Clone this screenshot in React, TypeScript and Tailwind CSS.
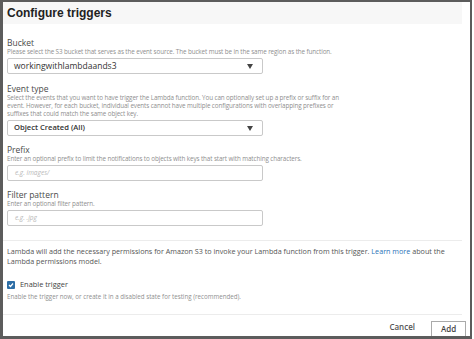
const font = { fontFamily: '"Open Sans", "Liberation Sans", sans-serif' };

function Label({ title, desc, descWidth }: { title: string; desc?: string; descWidth?: string }) {
  return (
    <div>
      <div className="text-[8.5px] leading-[11px] text-[#4a4a4a]">{title}</div>
      {desc && (
        <div className={`text-[6.3px] leading-[8px] text-[#8f8f8f] tracking-[-0.1px] ${descWidth ?? ''}`}>{desc}</div>
      )}
    </div>
  );
}

function Select({ children }: { children: React.ReactNode }) {
  return (
    <div className="mt-[2px] w-[256px] h-[16px] border border-[#c9c9c9] rounded-[2px] flex items-center justify-between pl-[6px] pr-[9px]">
      {children}
      <svg width="6" height="5" viewBox="0 0 6 5">
        <path d="M0 0 L6 0 L3 5 Z" fill="#444" />
      </svg>
    </div>
  );
}

function Input({ placeholder }: { placeholder: string }) {
  return (
    <div className="mt-[2px] w-[256px] h-[16px] border border-[#c9c9c9] rounded-[2px] flex items-center pl-[7px]">
      <span className="text-[6.5px] italic text-[#b8b8b8]">{placeholder}</span>
    </div>
  );
}

export default function App() {
  return (
    <div className="w-[474px] h-[339px] bg-white overflow-hidden" style={font}>
      <div className="w-[472px] h-[339px] border-l-[3px] border-t-[2px] border-r-[2px] border-b-[3px] border-[#5c5c5c] flex flex-col">
        {/* Header */}
        <div className="h-[22px] mr-[8px] bg-[#f7f7f7] flex items-center pl-[4px]">
          <h1 className="font-['Liberation_Sans_Narrow','Liberation_Sans',sans-serif] text-[12px] font-bold text-[#222]">
            Configure triggers
          </h1>
        </div>

        {/* Form */}
        <div className="px-[4px] pt-[13px]">
          <Label
            title="Bucket"
            desc="Please select the S3 bucket that serves as the event source. The bucket must be in the same region as the function."
          />
          <Select>
            <span className="text-[8.5px] text-[#333]">workingwithlambdaands3</span>
          </Select>

          <div className="mt-[9px]">
            <Label
              title="Event type"
              descWidth="w-[345px]"
              desc="Select the events that you want to have trigger the Lambda function. You can optionally set up a prefix or suffix for an event. However, for each bucket, individual events cannot have multiple configurations with overlapping prefixes or suffixes that could match the same object key."
            />
          </div>
          <Select>
            <span className="text-[7.6px] font-semibold text-[#333]">Object Created (All)</span>
          </Select>

          <div className="mt-[8px]">
            <Label
              title="Prefix"
              desc="Enter an optional prefix to limit the notifications to objects with keys that start with matching characters."
            />
          </div>
          <Input placeholder="e.g. images/" />

          <div className="mt-[8px]">
            <Label title="Filter pattern" desc="Enter an optional filter pattern." />
          </div>
          <Input placeholder="e.g. .jpg" />
        </div>

        <div className="mt-[14px] mr-[8px] border-t border-[#ececec]" />

        {/* Permissions + enable */}
        <div className="px-[4px] pt-[5px]">
          <p className="text-[7.2px] leading-[10px] text-[#555] w-[445px]">
            Lambda will add the necessary permissions for Amazon S3 to invoke your Lambda function from this trigger.{' '}
            <span className="text-[#2a73b8]">Learn more</span> about the Lambda permissions model.
          </p>

          <div className="mt-[13px] h-[11px] flex items-center gap-[5px]">
            <div className="w-[8px] h-[8px] rounded-[1px] bg-[#2d6ea6] flex items-center justify-center">
              <svg width="6" height="6" viewBox="0 0 6 6">
                <path d="M1 3 L2.5 4.5 L5 1.5" stroke="white" strokeWidth="1.2" fill="none" />
              </svg>
            </div>
            <span className="text-[7.4px] text-[#444]">Enable trigger</span>
          </div>
          <div className="mt-[3px] text-[6.2px] leading-[8px] text-[#8f8f8f]">
            Enable the trigger now, or create it in a disabled state for testing (recommended).
          </div>
        </div>

        <div className="mt-[13px] mr-[8px] border-t border-[#ececec]" />

        {/* Footer */}
        <div className="flex-1 flex items-end justify-end gap-[16px] pr-[4px]">
          <button className="text-[8px] font-semibold text-[#555] mb-[3px]">Cancel</button>
          <button className="w-[35px] h-[15px] border border-[#aaa] border-b-0 text-[8px] font-semibold text-[#444]">Add</button>
        </div>
      </div>
    </div>
  );
}
